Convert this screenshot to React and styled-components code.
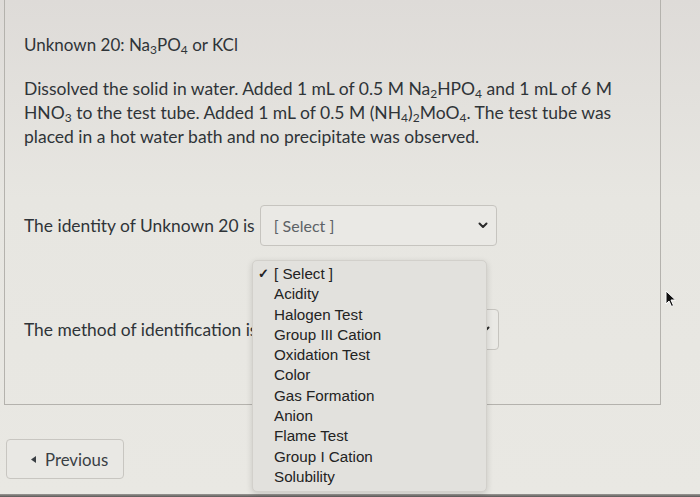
import React from "react";
import styled, { createGlobalStyle } from "styled-components";

const GlobalStyle = createGlobalStyle`
  html, body {
    margin: 0;
    padding: 0;
    background: #e6e4e0;
  }
  body {
    font-family: Lato, "Open Sans", sans-serif;
    color: #2f3438;
  }
`;

const Screen = styled.div`
  position: relative;
  width: 700px;
  height: 497px;
  overflow: hidden;
  background: linear-gradient(180deg, #dedbd8 0%, #e7e6e1 40%, #e9e8e3 100%);
  display: flex;
  flex-direction: column;
`;

const Panel = styled.div`
  margin-left: 4px;
  width: 657px;
  border: 1px solid #b4b2ad;
  border-top: none;
  padding: 33px 0 54px 19px;
  box-sizing: border-box;
`;

const Title = styled.div`
  font-size: 17px;
  line-height: 24px;
`;

const Sub = styled.sub`
  font-size: 12px;
  line-height: 0;
  vertical-align: -3px;
`;

const Paragraph = styled.p`
  margin: 20px 0 0;
  font-size: 17.5px;
  line-height: 24px;
  width: 620px;
`;

const Question = styled.div`
  display: flex;
  align-items: center;
  gap: 5px;
  font-size: 17.4px;
  margin-top: ${(p) => p.$gap}px;
`;

const SelectBox = styled.div`
  width: 237px;
  height: 41px;
  flex-shrink: 0;
  box-sizing: border-box;
  border: 1px solid #c6c4bf;
  border-radius: 4px;
  background: #eae9e5;
  display: flex;
  align-items: center;
  justify-content: space-between;
  padding: 0 8px 0 13px;
  font-size: 16px;
  color: #5d6266;
`;

const Nav = styled.div`
  padding: 34px 0 0 6px;
`;

const Button = styled.div`
  width: 118px;
  height: 40px;
  box-sizing: border-box;
  border: 1px solid #c8c6c1;
  border-radius: 4px;
  background: #e9e8e4;
  display: flex;
  align-items: center;
  gap: 9px;
  padding-left: 24px;
  font-size: 16.8px;
  color: #3a3f44;
`;

const Bezel = styled.div`
  margin-top: auto;
  height: 3px;
  background: linear-gradient(180deg, #9a9895, #5a5856);
`;

const Menu = styled.ul`
  position: absolute;
  left: 252px;
  top: 260px;
  width: 235px;
  height: 232px;
  box-sizing: border-box;
  margin: 0;
  padding: 3px 0 0;
  list-style: none;
  background: #e2e1dd;
  border: 1px solid #d2d0cb;
  border-radius: 5px;
  box-shadow: 0 2px 6px rgba(0, 0, 0, 0.15);
  font-family: "Liberation Sans", Arial, sans-serif;
  font-size: 15.2px;
  color: #232323;
`;

const Item = styled.li`
  position: relative;
  height: 20.3px;
  line-height: 20.3px;
  padding-left: 21px;
`;

const Check = styled.span`
  position: absolute;
  left: 5px;
  top: 0;
  font-size: 13px;
  font-weight: bold;
`;

const Cursor = styled.svg`
  position: absolute;
  left: 665px;
  top: 290px;
`;

const Chevron = () => (
  <svg width="10" height="7" viewBox="0 0 10 7">
    <path d="M1.5 1.5 L5 5 L8.5 1.5" fill="none" stroke="#2a2a2a" strokeWidth="2" strokeLinecap="round" strokeLinejoin="round" />
  </svg>
);

const options = [
  "[ Select ]",
  "Acidity",
  "Halogen Test",
  "Group III Cation",
  "Oxidation Test",
  "Color",
  "Gas Formation",
  "Anion",
  "Flame Test",
  "Group I Cation",
  "Solubility",
];

export default function App() {
  return (
    <>
      <GlobalStyle />
      <Screen>
        <Panel>
          <Title>
            Unknown 20: Na<Sub>3</Sub>PO<Sub>4</Sub> or KCl
          </Title>
          <Paragraph>
            Dissolved the solid in water. Added 1 mL of 0.5 M Na<Sub>2</Sub>HPO<Sub>4</Sub> and 1 mL of 6 M
            <br />
            HNO<Sub>3</Sub> to the test tube. Added 1 mL of 0.5 M (NH<Sub>4</Sub>)<Sub>2</Sub>MoO<Sub>4</Sub>. The test tube was
            <br />
            placed in a hot water bath and no precipitate was observed.
          </Paragraph>
          <Question $gap={56}>
            The identity of Unknown 20 is
            <SelectBox>
              [ Select ]
              <Chevron />
            </SelectBox>
          </Question>
          <Question $gap={63}>
            The method of identification is
            <SelectBox>
              [ Select ]
              <Chevron />
            </SelectBox>
          </Question>
        </Panel>
        <Nav>
          <Button>
            <svg width="5" height="7" viewBox="0 0 5 7">
              <path d="M5 0 L0 3.5 L5 7 Z" fill="#3a3f44" />
            </svg>
            Previous
          </Button>
        </Nav>
        <Bezel />
        <Menu>
          {options.map((o, i) => (
            <Item key={o}>
              {i === 0 && <Check>✓</Check>}
              {o}
            </Item>
          ))}
        </Menu>
        <Cursor width="12" height="18" viewBox="0 0 12 18">
          <path d="M1 1 L1 14 L4 11 L6.5 16.5 L8.5 15.5 L6 10 L10.5 10 Z" fill="#111" stroke="#fff" strokeWidth="1" />
        </Cursor>
      </Screen>
    </>
  );
}
